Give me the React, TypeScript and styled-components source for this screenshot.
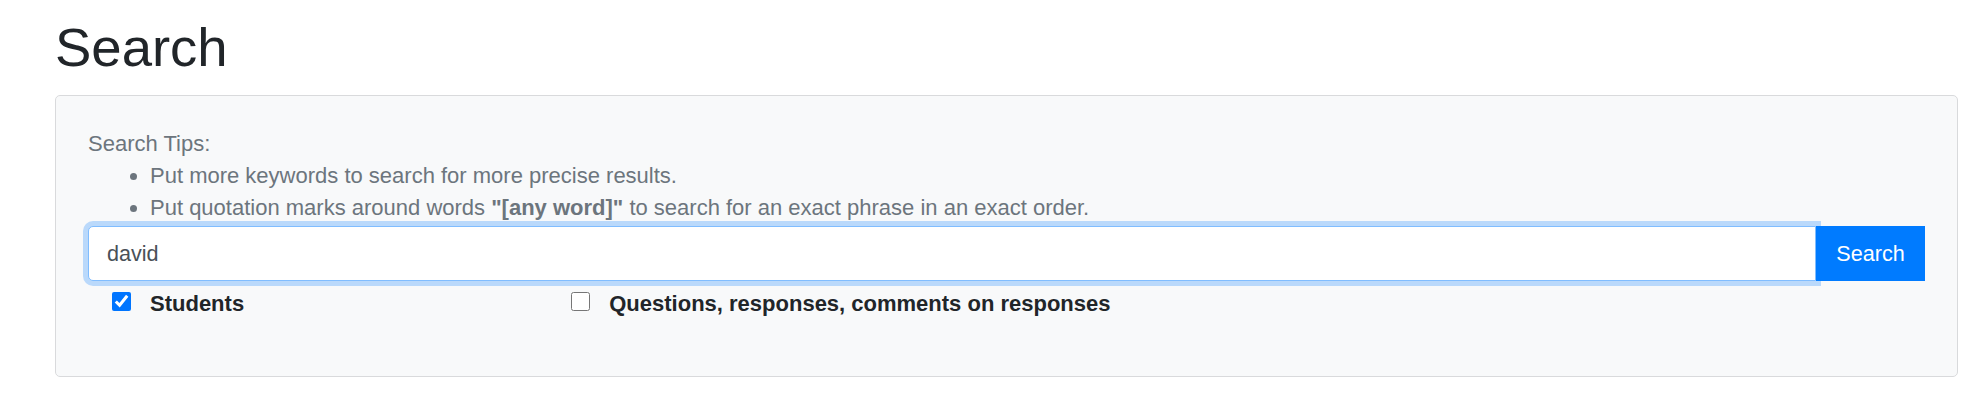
import styled, { createGlobalStyle } from "styled-components"

const GlobalStyle = createGlobalStyle`
    body {
        margin: 0;
        background: #ffffff;
        font-family: "Liberation Sans", Arial, sans-serif;
    }
`

export default function App() {
    return (
        <>
            <GlobalStyle />
            <Page>
                <Title>Search</Title>
                <Card>
                    <TipsTitle>Search Tips:</TipsTitle>
                    <TipsList>
                        <li>Put more keywords to search for more precise results.</li>
                        <li>
                            Put quotation marks around words <b>"[any word]"</b> to search for an exact phrase in an exact order.
                        </li>
                    </TipsList>
                    <SearchRow>
                        <SearchInput type="text" defaultValue="david" autoFocus />
                        <SearchButton type="button">Search</SearchButton>
                    </SearchRow>
                    <FilterGrid>
                        <FilterOption>
                            <CheckBox type="checkbox" defaultChecked />
                            Students
                        </FilterOption>
                        <FilterOption>
                            <CheckBox type="checkbox" />
                            Questions, responses, comments on responses
                        </FilterOption>
                    </FilterGrid>
                </Card>
            </Page>
        </>
    )
}

const Page = styled.div`
    padding: 16px 26px 0 55px;
`

const Title = styled.h1`
    margin: 0 0 15px;
    font-size: 54.5px;
    line-height: 64px;
    font-weight: 400;
    color: #212529;
`

const Card = styled.div`
    background-color: #f8f9fa;
    border: 1px solid #d9dadc;
    border-radius: 5px;
    padding: 32px 32px 56px;
    font-size: 22px;
    line-height: 32px;
`

const TipsTitle = styled.div`
    color: #6c757d;
`

const TipsList = styled.ul`
    margin: 0;
    padding-left: 62px;
    color: #6c757d;

    & b{
        font-weight: 700;
    }
`

const SearchRow = styled.div`
    display: flex;
    margin-top: 2px;
`

const SearchInput = styled.input`
    flex: 1;
    min-width: 0;
    height: 55px;
    box-sizing: border-box;
    padding: 0 18px;
    border: 1.33px solid #80bdff;
    border-radius: 5px 0 0 5px;
    box-shadow: 0 0 0 5px rgba(0, 123, 255, 0.25);
    outline: none;
    background: #ffffff;
    color: #495057;
    caret-color: #212529;
    font-family: "Liberation Sans", Arial, sans-serif;
    font-size: 21.6px;
`

const SearchButton = styled.button`
    position: relative;
    z-index: 1;
    width: 109px;
    height: 55px;
    border: none;
    border-radius: 0;
    background-color: #007bff;
    color: #ffffff;
    font-family: "Liberation Sans", Arial, sans-serif;
    font-size: 21.6px;
    cursor: pointer;
`

const FilterGrid = styled.div`
    display: grid;
    grid-template-columns: repeat(4, minmax(0, 1fr));
    margin-top: 6.6px;
`

const FilterOption = styled.label`
    display: flex;
    align-items: flex-start;
    gap: 19px;
    padding-left: 24px;
    font-weight: 700;
    color: #212529;
    white-space: nowrap;
`

const CheckBox = styled.input`
    width: 19px;
    height: 19px;
    margin: 4px 0 0;
    flex: none;
`
